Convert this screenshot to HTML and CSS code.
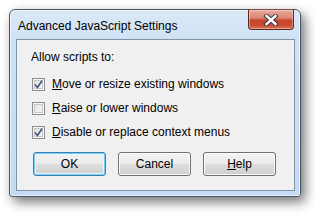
FILE: index.html
```html
<!DOCTYPE html>
<html>
<head>
<meta charset="utf-8">
<link rel="stylesheet" href="styles.css">
</head>
<body>
<div class="window">
  <div class="titlebar">
    <span class="title">Advanced JavaScript Settings</span>
    <button class="close" aria-label="Close">
      <svg width="16" height="12" viewBox="0 0 16 12">
        <path d="M3.5 2 L12.5 10 M12.5 2 L3.5 10" stroke="#3a3a44" stroke-width="4.4" stroke-linecap="square" fill="none"/>
        <path d="M3.5 2 L12.5 10 M12.5 2 L3.5 10" stroke="#ffffff" stroke-width="2.4" stroke-linecap="square" fill="none"/>
      </svg>
    </button>
  </div>
  <div class="client">
    <div class="heading">Allow scripts to:</div>
    <label class="row">
      <span class="box checked">
        <svg width="9" height="9" viewBox="0 0 9 9"><path d="M1 4.5 L3.5 7.5 L8 0.8" stroke="#3c4f8a" stroke-width="1.6" fill="none"/></svg>
      </span>
      <span class="label"><u>M</u>ove or resize existing windows</span>
    </label>
    <label class="row">
      <span class="box"></span>
      <span class="label"><u>R</u>aise or lower windows</span>
    </label>
    <label class="row">
      <span class="box checked">
        <svg width="9" height="9" viewBox="0 0 9 9"><path d="M1 4.5 L3.5 7.5 L8 0.8" stroke="#3c4f8a" stroke-width="1.6" fill="none"/></svg>
      </span>
      <span class="label"><u>D</u>isable or replace context menus</span>
    </label>
    <div class="buttons">
      <button class="btn default">OK</button>
      <button class="btn">Cancel</button>
      <button class="btn"><u>H</u>elp</button>
    </div>
  </div>
</div>
</body>
</html>
```
FILE: styles.css
```css
html, body {
  margin: 0;
  padding: 0;
  background: #ffffff;
}
body {
  width: 315px;
  height: 215px;
  overflow: hidden;
  padding: 9px 0 0 9px;
  box-sizing: border-box;
  font-family: "Liberation Sans", Arial, sans-serif;
  font-size: 12px;
  color: #000;
}
.window {
  width: 292px;
  height: 188px;
  box-sizing: border-box;
  border: 1px solid #4b5866;
  border-radius: 6px 6px 3px 3px;
  background: linear-gradient(180deg, #dbe8f6 0px, #cfe2f5 30px, #c3dbf3 100%);
  box-shadow: inset 0 0 0 1px rgba(255,255,255,0.55), 4px 5px 12px rgba(0,0,0,0.55);
  padding: 0 5px 5px 6px;
  display: flex;
  flex-direction: column;
}
.titlebar {
  height: 29px;
  display: flex;
  align-items: flex-start;
  justify-content: space-between;
}
.title {
  margin-top: 8px;
  margin-left: 2px;
  font-size: 12px;
  line-height: 16px;
  color: #000;
}
.close {
  margin: -1px 1px 0 0;
  width: 46px;
  height: 21px;
  padding: 0;
  border: 1px solid #5a2a22;
  border-top-color: #7a4a40;
  border-radius: 0 0 4px 4px;
  background: linear-gradient(180deg, #e9a99a 0%, #dc8a76 40%, #c8452c 55%, #c94a30 80%, #d9765a 100%);
  box-shadow: inset 0 0 0 1px rgba(255,255,255,0.35);
  display: flex;
  align-items: center;
  justify-content: center;
}
.client {
  flex: 1;
  border: 1px solid #8393a6;
  background: #f0f0f0;
  padding: 9px 0 0 15px;
}
.heading {
  line-height: 16px;
  margin-left: -1px;
  margin-bottom: 7px;
}
.row {
  display: flex;
  align-items: center;
  height: 24px;
}
.box {
  width: 13px;
  height: 13px;
  box-sizing: border-box;
  border: 1px solid #8e8f8f;
  background: linear-gradient(135deg, #dcdcdc 0%, #f0f0f0 55%, #fcfcfc 100%);
  box-shadow: inset 0 0 0 1px #f4f4f4, inset 0 0 0 2px #c8c8c8;
  display: flex;
  align-items: center;
  justify-content: center;
  margin-right: 7px;
}
.label {
  line-height: 16px;
}
.buttons {
  display: flex;
  gap: 12px;
  margin-top: 8px;
  margin-left: 1px;
}
.btn {
  width: 73px;
  height: 24px;
  box-sizing: border-box;
  font-family: inherit;
  font-size: 12px;
  color: #000;
  border: 1px solid #707070;
  border-radius: 3px;
  background: linear-gradient(180deg, #f2f2f2 0%, #ebebeb 48%, #dddddd 52%, #cfcfcf 100%);
  box-shadow: inset 0 0 0 1px #fcfcfc;
  padding: 0;
}
.btn.default {
  border-color: #3c7fb1;
  box-shadow: inset 0 0 0 1px #6fd0f3, inset 0 0 0 2px #e6f6fc;
}
```
